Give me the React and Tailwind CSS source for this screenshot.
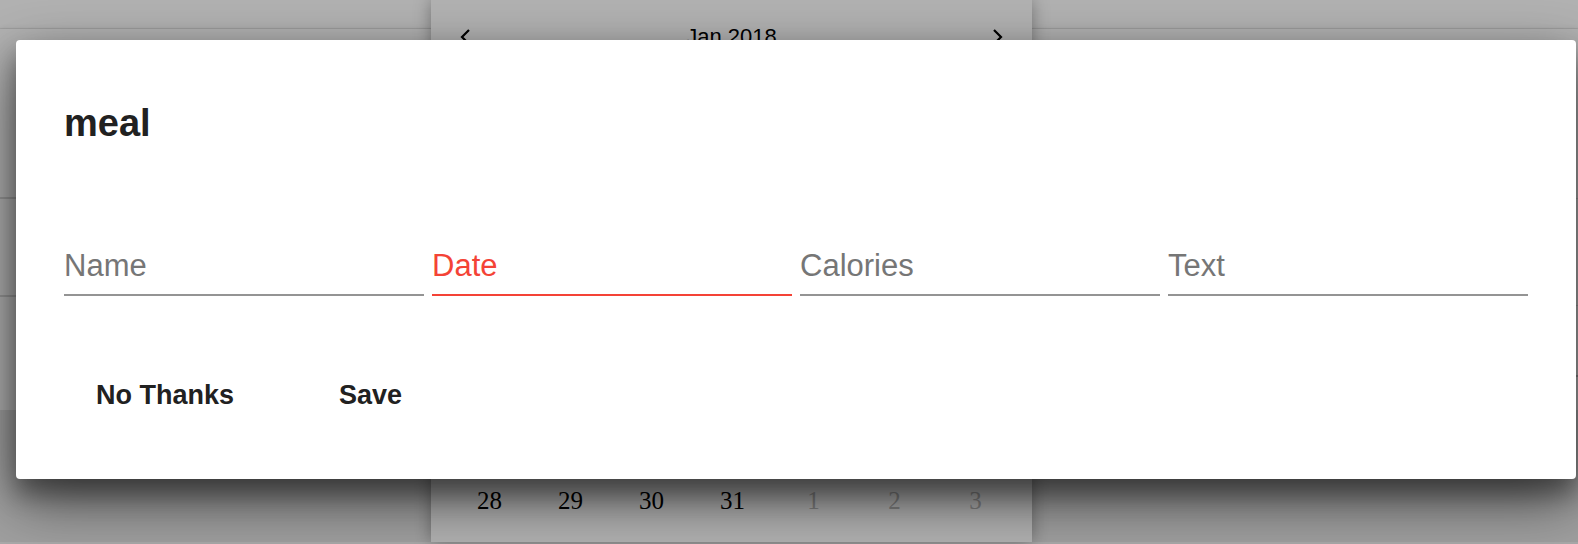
import React from 'react';

const fields = [
    { label: 'Name', active: false },
    { label: 'Date', active: true },
    { label: 'Calories', active: false },
    { label: 'Text', active: false },
];

const lastRow = [
    { day: 28, muted: false },
    { day: 29, muted: false },
    { day: 30, muted: false },
    { day: 31, muted: false },
    { day: 1, muted: true },
    { day: 2, muted: true },
    { day: 3, muted: true },
];

const Field = ({ label, active }) => (
    <div className={`flex-1 border-b-2 pb-[10px] ${active ? 'border-[#f44336]' : 'border-[#949494]'}`}>
        <span className={`block text-[31px] leading-[1.2] ${active ? 'text-[#f44336]' : 'text-[#767676]'}`}>
            {label}
        </span>
    </div>
);

const App = () => {
    return (
        <div className="relative h-[544px] w-full overflow-hidden bg-[#f4f4f4] font-['Liberation_Sans',Arial,sans-serif]">
            {/* Page behind the dialog */}
            <div className="flex h-[542px] flex-col">
                <div className="h-[29px] border-b border-[#ececec] bg-white" />
                <div className="flex h-[381px] bg-white shadow-[0_2px_6px_rgba(0,0,0,0.25)]">
                    <div className="flex w-[431px] flex-col">
                        <div className="h-[170px] border-b-2 border-[#dadada]" />
                        <div className="h-[98px] border-b-2 border-[#dadada]" />
                    </div>
                    <div className="flex-1" />
                    <div className="flex w-[546px] flex-col">
                        <div className="h-[170px] border-b border-[#e2e2e2]" />
                        <div className="h-[107px] border-b border-[#e2e2e2]" />
                        <div className="h-[71px] border-b-2 border-[#c4c4c4]" />
                    </div>
                </div>
                <div className="flex-1 bg-[#e6e6e6]" />
            </div>

            {/* Date picker popup */}
            <div className="absolute left-[431px] top-0 flex h-[542px] w-[601px] flex-col justify-between bg-white shadow-[0_0_16px_rgba(0,0,0,0.35)]">
                <div className="flex items-center justify-between px-[28px] pt-[24px] text-[22px] leading-[1.2] text-black">
                    <svg width="12" height="18" viewBox="0 0 12 18" fill="none" stroke="black" strokeWidth="2.2">
                        <path d="M10 2 L3 9 L10 16" />
                    </svg>
                    <span>Jan 2018</span>
                    <svg width="12" height="18" viewBox="0 0 12 18" fill="none" stroke="black" strokeWidth="2.2">
                        <path d="M2 2 L9 9 L2 16" />
                    </svg>
                </div>
                <div className="ml-[18px] grid w-[567px] grid-cols-7 pb-[26px] font-['Liberation_Serif',serif] text-[25px] leading-[1.2]">
                    {lastRow.map((d) => (
                        <span key={d.day} className={`text-center ${d.muted ? 'text-[#bdbdbd]' : 'text-black'}`}>
                            {d.day}
                        </span>
                    ))}
                </div>
            </div>

            {/* Backdrop */}
            <div className="absolute inset-0 bg-black/30" />

            {/* Dialog */}
            <div className="absolute left-4 top-10 w-[1560px] rounded-[4px] bg-white px-12 pb-[58px] pt-[61px] shadow-[0_22px_60px_rgba(0,0,0,0.55),0_15px_24px_rgba(0,0,0,0.35)]">
                <h2 className="text-[38px] font-bold leading-[1.2] text-[#212121]">meal</h2>

                <div className="mt-[100px] flex gap-2">
                    {fields.map((f) => (
                        <Field key={f.label} {...f} />
                    ))}
                </div>

                <div className="mt-[73px] flex gap-[41px]">
                    <button className="px-8 py-[10px] text-[27px] font-bold leading-[1.2] text-[#212121]">No Thanks</button>
                    <button className="px-8 py-[10px] text-[27px] font-bold leading-[1.2] text-[#212121]">Save</button>
                </div>
            </div>
        </div>
    );
};

export default App;
